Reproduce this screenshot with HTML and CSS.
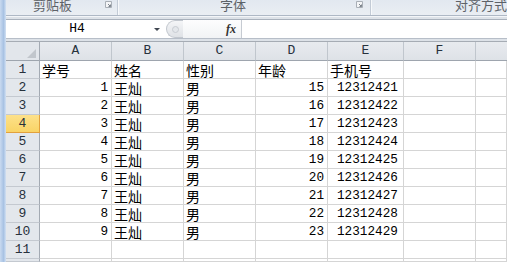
FILE: index.html
```html
<!DOCTYPE html>
<html lang="zh-CN">
<head>
<meta charset="utf-8">
<link rel="stylesheet" href="styles.css">
</head>
<body>
<div class="app">
  <div class="edge"></div>
  <div class="main">
    <div class="ribbon">
      <div class="group g1"><span class="label">剪贴板</span><svg class="launch" width="7" height="7" viewBox="0 0 7 7"><path d="M0.5 0.5H6.5V6.5H0.5Z" fill="#f4f5f7" stroke="#a9afb7"/><path d="M3 3L5.5 5.5M5.5 3.5V5.5H3.5" fill="none" stroke="#7d848d"/></svg></div>
      <div class="group g2"><span class="label">字体</span><svg class="launch" width="7" height="7" viewBox="0 0 7 7"><path d="M0.5 0.5H6.5V6.5H0.5Z" fill="#f4f5f7" stroke="#a9afb7"/><path d="M3 3L5.5 5.5M5.5 3.5V5.5H3.5" fill="none" stroke="#7d848d"/></svg></div>
      <div class="group g3"><span class="label">对齐方式</span></div>
    </div>
    <div class="fbar">
      <div class="namebox"><span class="ref">H4</span><span class="arrow"></span></div>
      <div class="splitter"><span class="dot"></span></div>
      <div class="fx">fx</div>
      <div class="input"></div>
    </div>
    <div class="sheet">
      <div class="c corner"><span class="tri"></span></div>
      <div class="c hd">A</div><div class="c hd">B</div><div class="c hd">C</div><div class="c hd">D</div><div class="c hd">E</div><div class="c hd">F</div><div class="c hd last"></div>

      <div class="c rh">1</div><div class="c t">学号</div><div class="c t">姓名</div><div class="c t">性别</div><div class="c t">年龄</div><div class="c t">手机号</div><div class="c"></div><div class="c"></div>
      <div class="c rh">2</div><div class="c n">1</div><div class="c t">王灿</div><div class="c t">男</div><div class="c n">15</div><div class="c tel">12312421</div><div class="c"></div><div class="c"></div>
      <div class="c rh">3</div><div class="c n">2</div><div class="c t">王灿</div><div class="c t">男</div><div class="c n">16</div><div class="c tel">12312422</div><div class="c"></div><div class="c"></div>
      <div class="c rh sel">4</div><div class="c n">3</div><div class="c t">王灿</div><div class="c t">男</div><div class="c n">17</div><div class="c tel">12312423</div><div class="c"></div><div class="c"></div>
      <div class="c rh">5</div><div class="c n">4</div><div class="c t">王灿</div><div class="c t">男</div><div class="c n">18</div><div class="c tel">12312424</div><div class="c"></div><div class="c"></div>
      <div class="c rh">6</div><div class="c n">5</div><div class="c t">王灿</div><div class="c t">男</div><div class="c n">19</div><div class="c tel">12312425</div><div class="c"></div><div class="c"></div>
      <div class="c rh">7</div><div class="c n">6</div><div class="c t">王灿</div><div class="c t">男</div><div class="c n">20</div><div class="c tel">12312426</div><div class="c"></div><div class="c"></div>
      <div class="c rh">8</div><div class="c n">7</div><div class="c t">王灿</div><div class="c t">男</div><div class="c n">21</div><div class="c tel">12312427</div><div class="c"></div><div class="c"></div>
      <div class="c rh">9</div><div class="c n">8</div><div class="c t">王灿</div><div class="c t">男</div><div class="c n">22</div><div class="c tel">12312428</div><div class="c"></div><div class="c"></div>
      <div class="c rh">10</div><div class="c n">9</div><div class="c t">王灿</div><div class="c t">男</div><div class="c n">23</div><div class="c tel">12312429</div><div class="c"></div><div class="c"></div>
      <div class="c rh">11</div><div class="c"></div><div class="c"></div><div class="c"></div><div class="c"></div><div class="c"></div><div class="c"></div><div class="c"></div>
      <div class="c rh"></div><div class="c"></div><div class="c"></div><div class="c"></div><div class="c"></div><div class="c"></div><div class="c"></div><div class="c"></div>
    </div>
  </div>
</div>
</body>
</html>
```
FILE: styles.css
```css
* { box-sizing: border-box; }
html, body { margin: 0; padding: 0; }
body {
  width: 507px;
  height: 262px;
  overflow: hidden;
  background: #dde2e8;
  font-family: "Noto Sans CJK SC", sans-serif;
}
.app {
  display: flex;
  height: 262px;
  overflow: hidden;
}
.edge {
  width: 6px;
  flex: none;
  background: linear-gradient(to right, #c9daf0, #a8c2e3 60%, #d2e1f3);
}
.main {
  flex: 1;
  min-width: 0;
  display: flex;
  flex-direction: column;
  overflow: hidden;
}
.ribbon {
  height: 16px;
  flex: none;
  display: flex;
  background: linear-gradient(#e2e8f0, #eaeef3);
  border-bottom: 1px solid #aeb8c5;
  box-shadow: 0 1px 0 #f3f5f8;
  overflow: hidden;
}
.group {
  display: flex;
  align-items: flex-start;
  height: 15px;
  border-right: 1px solid #c3cbd6;
  box-shadow: 1px 0 0 #f7f9fb;
}
.label {
  font-size: 13px;
  line-height: 13px;
  color: #5d6268;
  margin-top: -2px;
}
.launch {
  margin-left: auto;
  margin-top: 1px;
}
.g1 { width: 112px; padding-left: 27px; padding-right: 5px; }
.g2 { width: 253px; padding-left: 102px; padding-right: 7px; }
.g3 { flex: 1; padding-left: 84px; border-right: none; box-shadow: none; }

.fbar {
  margin-top: 3px;
  height: 20px;
  flex: none;
  display: flex;
  background: #fff;
  border-top: 1px solid #a9b1bc;
  border-bottom: 1px solid #b7bec8;
}
.namebox {
  width: 157px;
  display: flex;
  align-items: center;
}
.ref {
  width: 142px;
  text-align: center;
  font: 13px/18px "Liberation Mono", monospace;
  color: #000;
}
.arrow {
  margin-left: 6px;
  width: 0;
  height: 0;
  border-left: 3px solid transparent;
  border-right: 3px solid transparent;
  border-top: 3px solid #3f4650;
}
.splitter {
  margin-left: 3px;
  width: 17px;
  height: 18px;
  border-radius: 9px 0 0 9px;
  background: linear-gradient(#f4f5f7, #dfe2e6);
  border: 1px solid #c2c7ce;
  border-right: none;
  display: flex;
  align-items: center;
  justify-content: center;
}
.dot {
  width: 7px;
  height: 7px;
  border-radius: 50%;
  background: #e4e7eb;
  border: 1px solid #c8ccd2;
}
.fx {
  width: 59px;
  text-align: right;
  padding-right: 5px;
  font: italic bold 12px/18px "Liberation Serif", serif;
  color: #333;
  border-right: 1px solid #c6cbd2;
  background: linear-gradient(#fdfdfe, #f1f3f5);
}
.input { flex: 1; background: #fff; }

.sheet {
  margin-top: 2px;
  flex: 1;
  min-height: 0;
  overflow: hidden;
  display: grid;
  grid-template-columns: 34px 72px 72px 72px 72px 76px 72px 1fr;
  grid-template-rows: 19px repeat(11, 18px) 1fr;
  border-top: 1px solid #a6acb4;
  background: #fff;
}
.c {
  border-right: 1px solid #d5d5d5;
  border-bottom: 1px solid #d5d5d5;
  display: flex;
  align-items: flex-end;
  overflow: hidden;
  white-space: nowrap;
  color: #000;
  min-height: 0;
}
.corner {
  background: #e2e6eb;
  border-right: 1px solid #a3aab3;
  border-bottom: 1px solid #9ea5ae;
  justify-content: flex-end;
  padding: 0 3px 2px 0;
}
.tri {
  width: 0;
  height: 0;
  border-left: 9px solid transparent;
  border-bottom: 9px solid #c1c6cc;
}
.hd {
  background: linear-gradient(#e8ebef, #dee2e7);
  border-right: 1px solid #c0c6cd;
  border-bottom: 1px solid #9ea5ae;
  justify-content: center;
  font: 13px/16px "Liberation Mono", monospace;
  color: #27313c;
  padding-bottom: 1px;
}
.hd.last { border-right: none; }
.rh {
  background: #e3e7ec;
  border-right: 1px solid #a3aab3;
  border-bottom: 1px solid #c4c9d0;
  justify-content: center;
  font: 13px/16px "Liberation Mono", monospace;
  color: #27313c;
}
.rh.sel {
  background: linear-gradient(#fde18a, #f9d466);
  border-right-color: #e2a13d;
  border-bottom-color: #e2a13d;
}
.t {
  font-size: 14px;
  line-height: 16px;
  padding-left: 2px;
}
.n {
  justify-content: flex-end;
  padding-right: 3px;
  padding-bottom: 1px;
  font: 12.7px/15px "Liberation Mono", monospace;
}
.tel {
  padding-left: 9px;
  padding-bottom: 1px;
  font: 12.7px/15px "Liberation Mono", monospace;
}
```
